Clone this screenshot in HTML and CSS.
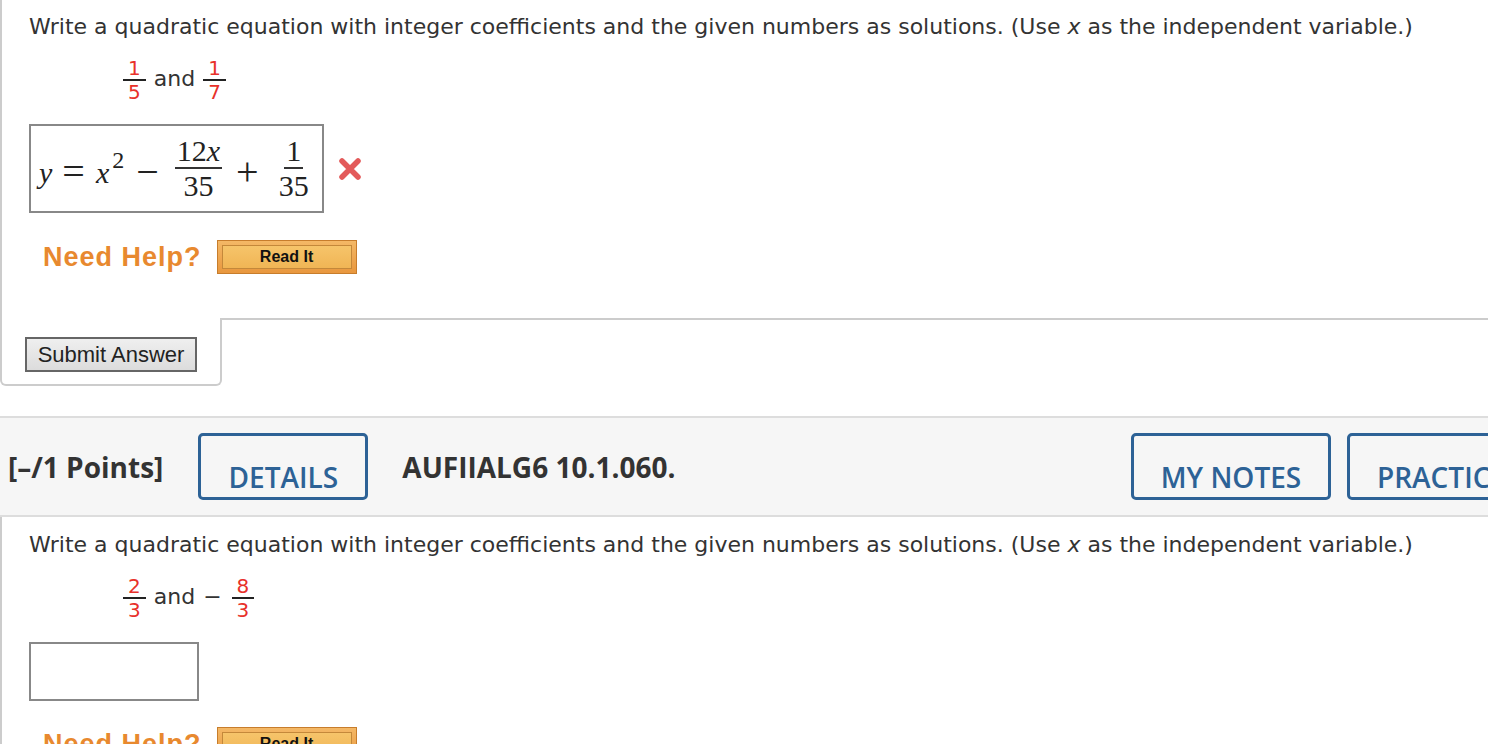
FILE: index.html
```html
<!DOCTYPE html>
<html>
<head>
<meta charset="utf-8">
<link rel="stylesheet" href="styles.css">
</head>
<body>
<div class="page">
  <section class="card">
    <div class="card-body">
      <p class="prompt">Write a quadratic equation with integer coefficients and the given numbers as solutions. (Use <i>x</i> as the independent variable.)</p>
      <div class="givens">
        <span class="frac"><span class="num">1</span><span class="den">5</span></span>
        <span class="and">and</span>
        <span class="frac"><span class="num">1</span><span class="den">7</span></span>
      </div>
      <div class="answer-row">
        <div class="eqbox">
          <span class="mi">y</span><span class="mo eq">=</span><span class="mi">x</span><sup class="sup">2</sup><span class="mo minus">−</span><span class="mfrac"><span class="mnum">12<i>x</i></span><span class="mden">35</span></span><span class="mo plus">+</span><span class="mfrac"><span class="mnum">1</span><span class="mden">35</span></span>
        </div>
        <svg class="xmark" width="26" height="26" viewBox="0 0 26 26"><path d="M5 5 L21 21 M21 5 L5 21" stroke="#e35a5a" stroke-width="5.5" stroke-linecap="round"/></svg>
      </div>
      <div class="help">
        <span class="need">Need Help?</span>
        <span class="readit"><span class="readit-in">Read It</span></span>
      </div>
    </div>
    <div class="submit-row">
      <div class="tab"><button class="submit">Submit Answer</button></div>
      <div class="fill"></div>
    </div>
  </section>

  <div class="qhead">
    <span class="points">[–/1 Points]</span>
    <span class="hbtn details">DETAILS</span>
    <span class="qid">AUFIIALG6 10.1.060.</span>
    <span class="hbtn notes">MY NOTES</span>
    <span class="hbtn practice">PRACTICE ANOTHER</span>
  </div>

  <section class="card card2">
    <div class="card-body">
      <p class="prompt">Write a quadratic equation with integer coefficients and the given numbers as solutions. (Use <i>x</i> as the independent variable.)</p>
      <div class="givens">
        <span class="frac"><span class="num">2</span><span class="den">3</span></span>
        <span class="and">and</span>
        <span class="and neg">−</span>
        <span class="frac"><span class="num">8</span><span class="den">3</span></span>
      </div>
      <div class="answer-row">
        <div class="emptybox"></div>
      </div>
      <div class="help">
        <span class="need">Need Help?</span>
        <span class="readit"><span class="readit-in">Read It</span></span>
      </div>
    </div>
  </section>
</div>
</body>
</html>
```
FILE: styles.css
```css
html, body {
  margin: 0;
  padding: 0;
  background: #fff;
  overflow: hidden;
}
.page {
  width: 1488px;
  height: 744px;
  overflow: hidden;
  font-family: "DejaVu Sans", Verdana, sans-serif;
  color: #333;
}
.card-body {
  border-left: 2px solid #ccc;
  padding: 14px 0 0 27px;
  height: 318px;
  box-sizing: border-box;
}
.prompt {
  margin: 0;
  font-size: 22px;
  line-height: 26px;
  white-space: nowrap;
}
.givens {
  display: flex;
  align-items: center;
  gap: 8px;
  margin: 17px 0 0 94px;
  font-size: 22px;
  height: 46px;
}
.frac {
  display: inline-flex;
  flex-direction: column;
  align-items: center;
  color: #e8312a;
  font-size: 20px;
  line-height: 22px;
}
.frac .num {
  border-bottom: 2px solid #222;
  padding: 0 5px;
  text-align: center;
}
.and {
  color: #333;
  margin-top: -4px;
}
.and.neg {
  margin: -4px 2px 0 0;
}
.answer-row {
  display: flex;
  align-items: center;
  gap: 13px;
  margin-top: 21px;
}
.eqbox {
  width: 295px;
  height: 89px;
  box-sizing: border-box;
  border: 2px solid #888;
  display: flex;
  align-items: center;
  padding-left: 8px;
  font-family: "Liberation Serif", "Times New Roman", serif;
  font-size: 30px;
  color: #222;
  white-space: nowrap;
}
.mi {
  font-style: italic;
  margin-top: 8px;
}
.mo {
  font-size: 40px;
  line-height: 40px;
  margin-top: 6px;
}
.eq { margin-left: 10px; margin-right: 11px; }
.sup {
  font-size: 24px;
  margin-left: 3px;
  margin-top: -16px;
}
.minus { margin-left: 12px; margin-right: 16px; }
.plus { margin-left: 14px; margin-right: 20px; }
.mfrac {
  display: inline-flex;
  flex-direction: column;
  align-items: center;
  line-height: 30px;
}
.mnum {
  border-bottom: 2px solid #333;
  padding: 0 2px 1px;
}
.mden { padding-top: 2px; }
.help {
  display: flex;
  align-items: center;
  gap: 15px;
  margin: 27px 0 0 14px;
}
.need {
  font-family: "Liberation Sans", Arial, sans-serif;
  font-weight: bold;
  color: #e8892f;
  font-size: 27px;
  letter-spacing: 1px;
}
.readit {
  display: inline-block;
  background: linear-gradient(#f4b866, #e8973e);
  padding: 4px;
  border: 1px solid #c77d2c;
}
.readit-in {
  display: block;
  width: 130px;
  height: 24px;
  box-sizing: border-box;
  border: 1px solid #c4883a;
  background: linear-gradient(#f6c46a, #f0b555);
  font-family: "Liberation Sans", Arial, sans-serif;
  font-weight: bold;
  font-size: 16px;
  line-height: 22px;
  text-align: center;
  color: #111;
}
.submit-row {
  display: flex;
  height: 68px;
}
.tab {
  width: 222px;
  box-sizing: border-box;
  border: 2px solid #ccc;
  border-top: none;
  border-radius: 0 0 6px 6px;
  padding: 19px 0 0 23px;
}
.submit {
  width: 172px;
  height: 35px;
  border: 2px solid #666;
  border-radius: 0;
  background: linear-gradient(#efefef, #dcdcdc);
  font-family: "Liberation Sans", Arial, sans-serif;
  font-size: 22px;
  color: #222;
  padding: 0;
}
.fill {
  flex: 1;
  border-top: 2px solid #ccc;
}
.qhead {
  margin-top: 30px;
  width: 1700px;
  height: 101px;
  box-sizing: border-box;
  background: #f6f6f6;
  border-top: 2px solid #ddd;
  border-bottom: 2px solid #ddd;
  display: flex;
  align-items: center;
  padding-left: 8px;
  font-family: "Open Sans", sans-serif;
  white-space: nowrap;
}
.points, .qid {
  font-weight: bold;
  font-size: 28px;
  color: #333;
}
.hbtn {
  flex: none;
  box-sizing: border-box;
  height: 67px;
  border: 3px solid #2d6296;
  border-radius: 5px;
  color: #2d6296;
  font-weight: 600;
  font-size: 28px;
  line-height: 34px;
  display: flex;
  align-items: flex-end;
  justify-content: center;
  padding-bottom: 3px;
}
.details {
  width: 170px;
  margin: 0 34px 0 35px;
}
.notes {
  width: 200px;
  margin-left: auto;
  margin-right: 16px;
}
.practice {
  width: 353px;
  justify-content: flex-start;
  padding-left: 27px;
}
.card2 .card-body {
  height: 240px;
  padding-top: 15px;
}
.emptybox {
  width: 170px;
  height: 59px;
  box-sizing: border-box;
  border: 2px solid #888;
}
.card2 .help { margin-top: 26px; }
```
